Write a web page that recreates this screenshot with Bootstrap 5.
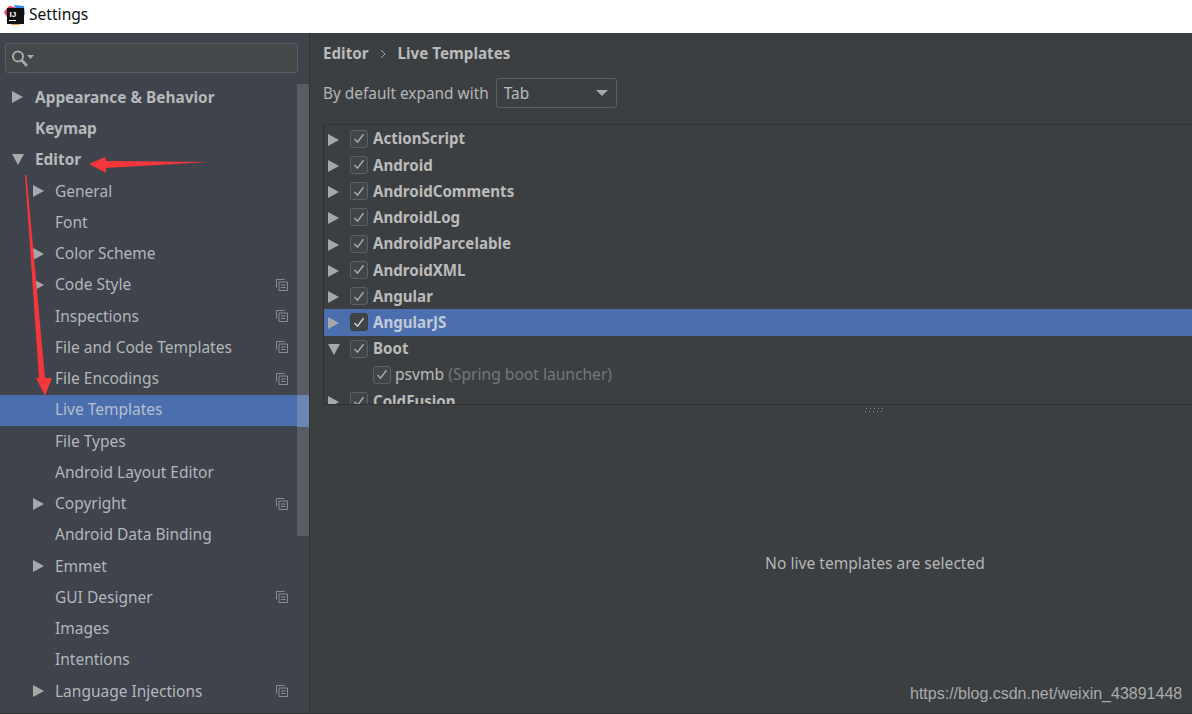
<!doctype html>
<html lang="en"><head><meta charset="utf-8"><title>Settings</title>
<link href="https://cdn.jsdelivr.net/npm/bootstrap@5.3.0/dist/css/bootstrap.min.css" rel="stylesheet">
<style>
html,body{height:714px;overflow:hidden}
body{background:#3c3f41;font-family:"Noto Sans",sans-serif;color:#bbb;position:relative}
.tbar{height:33px;background:#fff;color:#111;font-size:15.6px;padding:0 0 3px 4px;gap:4px}
.logo{width:21px;height:20px;display:block}
.logo-t{font:bold 8px "Liberation Sans",sans-serif;fill:#fff}
.main{height:681px;border-bottom:1px solid #2f3133}
.side{width:310px;background:#3e434c;border-right:1px solid #323232;position:relative;flex:none}
.sbox{margin:10px 11px 0 5px;height:30px;background:#45484a;border:1px solid #5b5e60;border-radius:3px;padding-left:6px}
.slist{margin-top:9.4px}
.srow{height:31.26px;font-size:15.5px;padding-left:55px;position:relative;white-space:nowrap;color:#b3b6ba;padding-bottom:1px}
.srow.top{padding-left:35px;font-size:15.4px;font-weight:700;color:#b6b8ba}
.srow.on{background:#4b6eaf;color:#b5bfcc}
.tri{position:absolute;fill:#a6a8aa}
.srow .tri{left:33px;top:9px}
.srow.top .tri{left:12px;top:9px}
.cp{position:absolute;left:276px;top:9px}
.sbar{position:absolute;left:297px;top:51px;width:12px;height:452px;background:#595c63}
.sbar-on{position:absolute;left:297px;top:362px;width:12px;height:32px;background:#6b85b5}
.pane{min-width:0;flex:1 1 auto}
.crumb{height:41px;padding-left:13px;font-size:15.2px;font-weight:700;color:#bbb;gap:11px;flex:none}
.crumb svg{margin-top:1px}
.expand{height:50px;padding:0 0 12px 13px;font-size:15.4px;gap:7px;color:#b4b6b8;flex:none}
.expand span{padding-top:1px}
.combo{width:121px;height:30px;border:1px solid #5c6063;border-radius:3px;background:#3c3f41;padding:0 8px 0 7px;color:#bbb}
.combo i{border-left:6px solid transparent;border-right:6px solid transparent;border-top:6px solid #a8aaac;display:block}
.tree{height:281px;margin-left:13px;padding-top:.5px;background:#3c3f41;border-left:1px solid #2f3133;border-top:1px solid #323537;border-bottom:1px solid #2f3133;overflow:hidden;flex:none}
.trow{height:26.25px;position:relative;font-size:15.1px;font-weight:700;padding-left:49px;color:#bbb;white-space:nowrap;flex:none}
.trow .tri{left:4px;top:8px}
.trow.on{background:#4b6eaf;color:#c1cad8}
.trow.kid{font-weight:400;padding-left:71px;font-size:15.6px}
.kid em{font-style:normal;color:#75777a}
.chk{position:absolute;left:26px;top:4px;width:18px;height:18px;background:#414547;border:1px solid #5c6063;border-radius:3px;display:flex;align-items:center;justify-content:center}
.on .chk{background:#3f4448;border-color:#3c3f41}
.kid .chk{left:49px}
.grip{margin:3px 0 0 554px;display:block;flex:none}
.empty{height:300px;font-size:15.6px;color:#b4b6b8;padding:2px 0 0 248px;flex:none}
.wm{position:absolute;left:910px;top:685px;font:16px "Liberation Sans",sans-serif;color:#a9abad;white-space:nowrap}
.ov{position:absolute;left:0;top:0;pointer-events:none}
</style></head><body>
<div class="tbar d-flex align-items-center">
<svg class="logo" viewBox="0 0 21 20"><polygon points="0,7 5,1 11,2 6,18" fill="#ea3a66"/><polygon points="10,0 20,1 21,10 14,8" fill="#2b8fe8"/><polygon points="2,15 8,20 16,20 8,10" fill="#f0a030"/><rect x="3" y="3" width="17" height="16" fill="#111"/><text class="logo-t" x="5.500" y="12">IJ</text><rect x="5" y="15" width="7" height="1" fill="#fff"/></svg>
<span>Settings</span></div>
<div class="main d-flex">
<nav class="side">
<div class="sbox d-flex align-items-center"><svg width="24" height="17" viewBox="0 0 24 17"><circle cx="6" cy="6.500" r="5" fill="none" stroke="#a6a8aa" stroke-width="2"/><path d="M9.500 10l5.500 6" stroke="#a6a8aa" stroke-width="2.600"/><path d="M15 5h7l-3.500 4z" fill="#a6a8aa"/></svg></div>
<div class="slist">
<div class="srow top d-flex align-items-center"><svg class="tri" width="11" height="12"><polygon points="0,0 11,6 0,12"/></svg>Appearance &amp; Behavior</div>
<div class="srow top d-flex align-items-center">Keymap</div>
<div class="srow top d-flex align-items-center"><svg class="tri" width="12" height="11"><polygon points="0,0 12,0 6,11"/></svg>Editor</div>
<div class="srow d-flex align-items-center"><svg class="tri" width="11" height="12"><polygon points="0,0 11,6 0,12"/></svg>General</div>
<div class="srow d-flex align-items-center">Font</div>
<div class="srow d-flex align-items-center"><svg class="tri" width="11" height="12"><polygon points="0,0 11,6 0,12"/></svg>Color Scheme</div>
<div class="srow d-flex align-items-center"><svg class="tri" width="11" height="12"><polygon points="0,0 11,6 0,12"/></svg>Code Style<svg class="cp" width="12" height="12" viewBox="0 0 12 12"><path d="M.5 8.500V.5h8M3 3h8.500v8.500H3z M5 6h4.500M5 8.500h4.500" fill="none" stroke="#8a8d90"/></svg></div>
<div class="srow d-flex align-items-center">Inspections<svg class="cp" width="12" height="12" viewBox="0 0 12 12"><path d="M.5 8.500V.5h8M3 3h8.500v8.500H3z M5 6h4.500M5 8.500h4.500" fill="none" stroke="#8a8d90"/></svg></div>
<div class="srow d-flex align-items-center">File and Code Templates<svg class="cp" width="12" height="12" viewBox="0 0 12 12"><path d="M.5 8.500V.5h8M3 3h8.500v8.500H3z M5 6h4.500M5 8.500h4.500" fill="none" stroke="#8a8d90"/></svg></div>
<div class="srow d-flex align-items-center">File Encodings<svg class="cp" width="12" height="12" viewBox="0 0 12 12"><path d="M.5 8.500V.5h8M3 3h8.500v8.500H3z M5 6h4.500M5 8.500h4.500" fill="none" stroke="#8a8d90"/></svg></div>
<div class="srow on d-flex align-items-center">Live Templates</div>
<div class="srow d-flex align-items-center">File Types</div>
<div class="srow d-flex align-items-center">Android Layout Editor</div>
<div class="srow d-flex align-items-center"><svg class="tri" width="11" height="12"><polygon points="0,0 11,6 0,12"/></svg>Copyright<svg class="cp" width="12" height="12" viewBox="0 0 12 12"><path d="M.5 8.500V.5h8M3 3h8.500v8.500H3z M5 6h4.500M5 8.500h4.500" fill="none" stroke="#8a8d90"/></svg></div>
<div class="srow d-flex align-items-center">Android Data Binding</div>
<div class="srow d-flex align-items-center"><svg class="tri" width="11" height="12"><polygon points="0,0 11,6 0,12"/></svg>Emmet</div>
<div class="srow d-flex align-items-center">GUI Designer<svg class="cp" width="12" height="12" viewBox="0 0 12 12"><path d="M.5 8.500V.5h8M3 3h8.500v8.500H3z M5 6h4.500M5 8.500h4.500" fill="none" stroke="#8a8d90"/></svg></div>
<div class="srow d-flex align-items-center">Images</div>
<div class="srow d-flex align-items-center">Intentions</div>
<div class="srow d-flex align-items-center"><svg class="tri" width="11" height="12"><polygon points="0,0 11,6 0,12"/></svg>Language Injections<svg class="cp" width="12" height="12" viewBox="0 0 12 12"><path d="M.5 8.500V.5h8M3 3h8.500v8.500H3z M5 6h4.500M5 8.500h4.500" fill="none" stroke="#8a8d90"/></svg></div>
</div>
<div class="sbar"></div><div class="sbar-on"></div>
</nav>
<section class="pane d-flex flex-column">
<div class="crumb d-flex align-items-center"><span>Editor</span><svg width="7" height="10" viewBox="0 0 7 10"><path d="M1 1l4 4-4 4" fill="none" stroke="#a6a8aa"/></svg><span>Live Templates</span></div>
<div class="expand d-flex align-items-center"><span>By default expand with</span><div class="combo d-flex align-items-center justify-content-between"><span>Tab</span><i></i></div></div>
<div class="tree d-flex flex-column">
<div class="trow d-flex align-items-center"><svg class="tri" width="11" height="12"><polygon points="0,0 11,6 0,12"/></svg><span class="chk"><svg width="12" height="11" viewBox="0 0 12 11"><path d="M1.500 6l3 3.200 6-8" fill="none" stroke="#a8aaac" stroke-width="1.500"/></svg></span>ActionScript</div>
<div class="trow d-flex align-items-center"><svg class="tri" width="11" height="12"><polygon points="0,0 11,6 0,12"/></svg><span class="chk"><svg width="12" height="11" viewBox="0 0 12 11"><path d="M1.500 6l3 3.200 6-8" fill="none" stroke="#a8aaac" stroke-width="1.500"/></svg></span>Android</div>
<div class="trow d-flex align-items-center"><svg class="tri" width="11" height="12"><polygon points="0,0 11,6 0,12"/></svg><span class="chk"><svg width="12" height="11" viewBox="0 0 12 11"><path d="M1.500 6l3 3.200 6-8" fill="none" stroke="#a8aaac" stroke-width="1.500"/></svg></span>AndroidComments</div>
<div class="trow d-flex align-items-center"><svg class="tri" width="11" height="12"><polygon points="0,0 11,6 0,12"/></svg><span class="chk"><svg width="12" height="11" viewBox="0 0 12 11"><path d="M1.500 6l3 3.200 6-8" fill="none" stroke="#a8aaac" stroke-width="1.500"/></svg></span>AndroidLog</div>
<div class="trow d-flex align-items-center"><svg class="tri" width="11" height="12"><polygon points="0,0 11,6 0,12"/></svg><span class="chk"><svg width="12" height="11" viewBox="0 0 12 11"><path d="M1.500 6l3 3.200 6-8" fill="none" stroke="#a8aaac" stroke-width="1.500"/></svg></span>AndroidParcelable</div>
<div class="trow d-flex align-items-center"><svg class="tri" width="11" height="12"><polygon points="0,0 11,6 0,12"/></svg><span class="chk"><svg width="12" height="11" viewBox="0 0 12 11"><path d="M1.500 6l3 3.200 6-8" fill="none" stroke="#a8aaac" stroke-width="1.500"/></svg></span>AndroidXML</div>
<div class="trow d-flex align-items-center"><svg class="tri" width="11" height="12"><polygon points="0,0 11,6 0,12"/></svg><span class="chk"><svg width="12" height="11" viewBox="0 0 12 11"><path d="M1.500 6l3 3.200 6-8" fill="none" stroke="#a8aaac" stroke-width="1.500"/></svg></span>Angular</div>
<div class="trow on d-flex align-items-center"><svg class="tri" width="11" height="12"><polygon points="0,0 11,6 0,12"/></svg><span class="chk"><svg width="12" height="11" viewBox="0 0 12 11"><path d="M1.500 6l3 3.200 6-8" fill="none" stroke="#d0d2d4" stroke-width="1.500"/></svg></span>AngularJS</div>
<div class="trow d-flex align-items-center"><svg class="tri" width="12" height="11"><polygon points="0,0 12,0 6,11"/></svg><span class="chk"><svg width="12" height="11" viewBox="0 0 12 11"><path d="M1.500 6l3 3.200 6-8" fill="none" stroke="#a8aaac" stroke-width="1.500"/></svg></span>Boot</div>
<div class="trow kid d-flex align-items-center"><span class="chk"><svg width="12" height="11" viewBox="0 0 12 11"><path d="M1.500 6l3 3.200 6-8" fill="none" stroke="#a8aaac" stroke-width="1.500"/></svg></span><span>psvmb <em>(Spring boot launcher)</em></span></div>
<div class="trow d-flex align-items-center"><svg class="tri" width="11" height="12"><polygon points="0,0 11,6 0,12"/></svg><span class="chk"><svg width="12" height="11" viewBox="0 0 12 11"><path d="M1.500 6l3 3.200 6-8" fill="none" stroke="#a8aaac" stroke-width="1.500"/></svg></span>ColdFusion</div>
</div>
<svg class="grip" width="20" height="5" viewBox="0 0 20 5"><path d="M2 .5h1M6 .5h1M10 .5h1M14 .5h1M18 .5h1M1 3.500h1M5 3.500h1M9 3.500h1M13 3.500h1M17 3.500h1" stroke="#8a8d90"/></svg>
<div class="empty d-flex align-items-center justify-content-center">No live templates are selected</div>
</section>
</div>
<svg class="ov" width="1192" height="714" viewBox="0 0 1192 714"><polygon points="89,164 105,157 106,161 209,162 106,168 106,173" fill="#f5363a"/><polygon points="25,175 26.500,175 45,378 52,378 45,396 36,378 39,378" fill="#f5363a"/></svg>
<div class="wm">https://blog.csdn.net/weixin_43891448</div>
</body></html>
